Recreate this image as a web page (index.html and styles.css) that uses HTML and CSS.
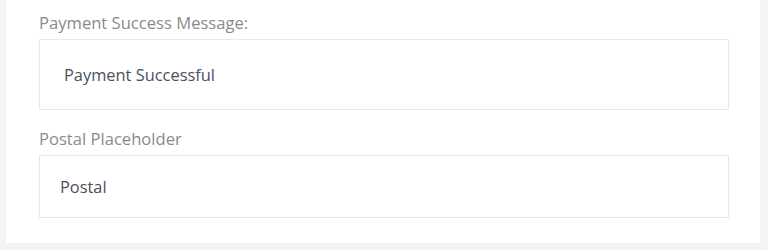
FILE: index.html
```html
<!DOCTYPE html>
<html lang="en">
<head>
<meta charset="UTF-8">
<meta name="viewport" content="width=device-width, initial-scale=1.0">
<title>Payment Settings</title>
<link rel="stylesheet" href="styles.css">
</head>
<body>
<div class="card">
    <div class="field">
        <label class="label" for="success-msg">Payment Success Message:</label>
        <div class="input input-tall" id="success-msg">Payment Successful</div>
    </div>
    <div class="field">
        <label class="label" for="postal">Postal Placeholder</label>
        <div class="input" id="postal">Postal</div>
    </div>
</div>
</body>
</html>
```

FILE: styles.css
```css
body {
    font-family: 'Open Sans', sans-serif;
    margin: 0;
    padding: 0 8px 0 6px;
    background-color: #f4f4f6;
    height: 250px;
    overflow: hidden;
}
.card {
    background-color: #fff;
    padding: 8px 31px 0 33px;
    height: 243px;
    box-sizing: border-box;
}
.field {
    margin-bottom: 14px;
}
.label {
    display: block;
    font-size: 16.6px;
    color: #8a8a8a;
    line-height: 30px;
    margin-bottom: 1px;
}
.input {
    display: flex;
    align-items: center;
    box-sizing: border-box;
    height: 63px;
    border: 1px solid #e8e8ee;
    color: #4a5060;
    font-size: 16.4px;
    padding: 0 20px;
}
.input-tall {
    height: 71px;
    padding: 0 24px;
}
```
